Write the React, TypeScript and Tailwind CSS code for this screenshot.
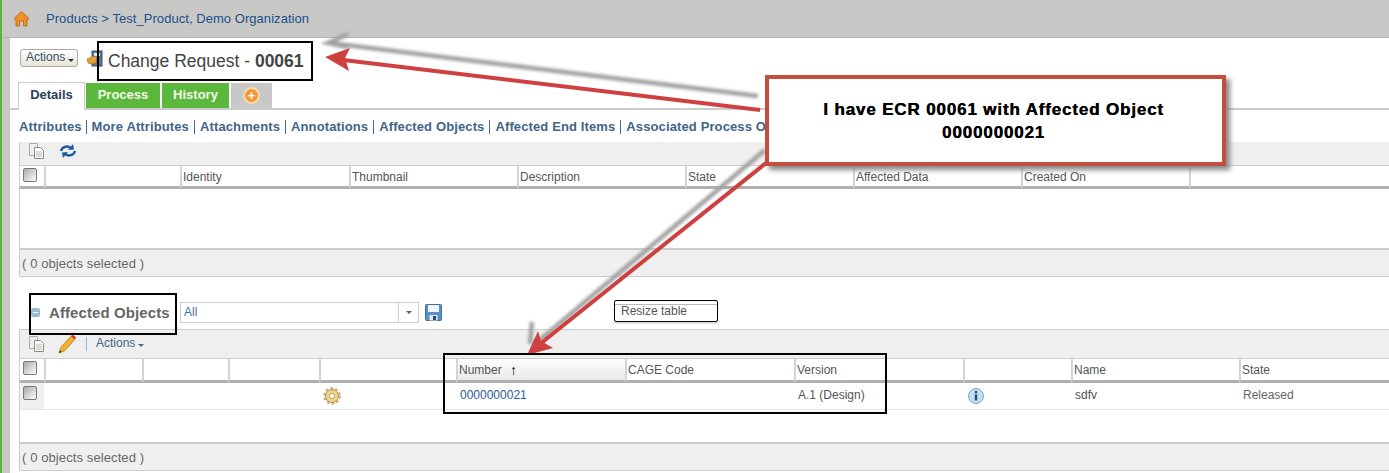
import React from 'react';

const firstCols = 'grid grid-cols-[24px_136px_169px_168px_168px_168px_168px_168px_1fr]';
const secondCols = 'grid grid-cols-[24px_98px_86px_91px_137px_169px_169px_169px_108px_168px_1fr]';

const CheckBox = () => (
  <span className="block w-[14px] h-[14px] rounded-[2px] border border-[#777] bg-gradient-to-br from-[#aaa] to-[#fff]" />
);

const CopyIcon = () => (
  <svg width="18" height="18" viewBox="0 0 18 18">
    <path d="M1.500 1.500h8v12h-8z" fill="#eee" stroke="#aaa" />
    <path d="M6.500 5.500h6l3 3v8h-9z" fill="#fafafa" stroke="#8c8c7c" />
    <path d="M8 10h6M8 12h6M8 14h6" stroke="#bbb" />
  </svg>
);

const RefreshIcon = () => (
  <svg width="18" height="16" viewBox="0 0 18 16">
    <path d="M2 8c1-4 6-6 10-3" fill="none" stroke="#1d5aa6" strokeWidth="2.400" />
    <path d="M16 8c-1 4-6 6-10 3" fill="none" stroke="#1d5aa6" strokeWidth="2.400" />
    <path d="M9 7l6-.5L14 1zM9 9l-6 .5L4 15z" fill="#1d5aa6" />
  </svg>
);

const HeaderCell = ({ children, className = '' }: { children?: React.ReactNode; className?: string }) => (
  <div className={`h-full pl-px pt-[2px] border-l-2 border-l-[#d4d4d4] border-b-[3px] border-b-[#b0b0b0] text-[#555] truncate ${className}`}>
    {children}
  </div>
);

const Footer = () => (
  <div className="h-[29px] pl-[2px] pt-px flex items-center bg-[#efefef] border-t-2 border-t-[#ccc] border-b border-b-[#ccc] text-[13px] tracking-[0.1px] text-[#666]">
    ( 0 objects selected )
  </div>
);

const links = ['Attributes', 'More Attributes', 'Attachments', 'Annotations', 'Affected Objects', 'Affected End Items', 'Associated Process Objects'];

export default function App() {
  return (
    <div className="relative w-[1389px] h-[473px] overflow-hidden bg-[#c8c8c6] border-l-2 border-l-[#5cb83c] font-['Liberation_Sans',Arial,sans-serif] text-[12px]">
      {/* breadcrumb */}
      <div className="h-[38px] flex items-center pl-[11px] border-b border-b-[#b4b4b2]">
        <svg width="17" height="17" viewBox="0 0 17 17">
          <path d="M8.500 1.500L16 8.500l-1.500 1.200-.5-.5V16h-3.500v-5h-4v5H3V9.200l-.5.500L1 8.500z" fill="#ee9322" stroke="#b8601a" strokeWidth="0.800" />
        </svg>
        <div className="ml-[16px] text-[13px] tracking-[0.05px] text-[#20508a]">Products &gt; Test_Product, Demo Organization</div>
      </div>

      <div className="ml-[8px] h-[435px] bg-white">
        {/* title */}
        <div className="h-[43px] flex items-center pl-[10px]">
          <div className="w-[58px] h-[18px] mt-[-3px] flex items-center pl-[5px] rounded-[3px] border border-[#aaa] bg-gradient-to-b from-white to-[#e8e4d4] text-[#33506e]">
            <span className="mt-[-2px]">Actions</span>
            <span className="ml-[3px] mt-[4px] border-x-[3px] border-x-transparent border-t-[3px] border-t-[#333]" />
          </div>
          <svg className="ml-[8px] mt-[-2px]" width="18" height="18" viewBox="0 0 18 18">
            <rect x="6" y="1" width="10" height="15" fill="#56789a" stroke="#33506e" />
            <rect x="8" y="3" width="6" height="3" fill="#dfe8f0" />
            <path d="M1 9l7-3 3 1-1 6-5 1-3-1z" fill="#e3a13a" stroke="#a86f1c" strokeWidth="0.600" />
          </svg>
          <div className="ml-[4px] mt-[4px] text-[17.5px] text-[#444]">
            Change Request - <span className="font-bold">00061</span>
          </div>
        </div>

        {/* tabs */}
        <div className="h-[29px] flex items-end pl-[8px] border-b-2 border-b-[#ccc] text-[13px] font-bold">
          <div className="w-[67px] h-[28px] -mb-[2px] pb-[3px] flex items-center justify-center bg-white border border-b-0 border-[#ccc] text-[#2c4058]">Details</div>
          <div className="ml-px w-[74px] h-[25px] pb-[2px] flex items-center justify-center bg-[#5cb83c] text-[#f2f8e8]">Process</div>
          <div className="ml-[2px] w-[67px] h-[25px] pb-[2px] flex items-center justify-center bg-[#5cb83c] text-[#f2f8e8]">History</div>
          <div className="ml-[2px] w-[41px] h-[25px] flex items-center justify-center bg-[#c8c8c8]">
            <span className="w-[17px] h-[17px] rounded-full bg-[#f09a3a] border-2 border-[#fbd9a8] flex items-center justify-center text-white text-[13px] leading-none">+</span>
          </div>
        </div>

        {/* sub navigation */}
        <div className="h-[32px] pt-[2px] flex items-center pl-[9px] text-[13px] font-bold tracking-[0.12px] text-[#3f6587] whitespace-nowrap">
          {links.map((link, i) => (
            <span key={link} className={i === 0 ? 'pr-[4px]' : 'px-[5px] border-l border-l-[#48688a] leading-[14px]'}>{link}</span>
          ))}
        </div>

        {/* first table */}
        <div className="ml-[9px] border-l border-l-[#ccc]">
          <div className="h-[23px] flex items-center gap-[13px] pl-[8px] pb-[5px] bg-[#efefef]">
            <CopyIcon />
            <RefreshIcon />
          </div>
          <div className={`${firstCols} h-[24px] bg-white border-t border-t-[#ccc]`}>
            <div className="h-full pl-[3px] pt-[2px] border-b-[3px] border-b-[#b0b0b0]"><CheckBox /></div>
            <HeaderCell />
            <HeaderCell>Identity</HeaderCell>
            <HeaderCell>Thumbnail</HeaderCell>
            <HeaderCell>Description</HeaderCell>
            <HeaderCell>State</HeaderCell>
            <HeaderCell>Affected Data</HeaderCell>
            <HeaderCell>Created On</HeaderCell>
            <HeaderCell />
          </div>
          <div className="h-[59px]" />
          <Footer />
        </div>

        {/* second table header */}
        <div className="h-[52px] flex items-end">
          <div className="mb-[5px] flex items-center">
            <span className="ml-[21px] w-[9px] h-[9px] rounded-[2px] bg-[#9bbcd8] flex items-center justify-center">
              <span className="w-[5px] h-px bg-white" />
            </span>
            <span className="ml-[9px] w-[131px] pt-px text-[15px] font-bold text-[#666] tracking-[0.1px]">Affected Objects</span>
            <div className="w-[239px] h-[21px] flex border border-[#ccc] text-[#4d6f94]">
              <span className="flex-1 pl-[3px] leading-[19px]">All</span>
              <span className="w-[20px] border-l border-l-[#ccc] flex items-center justify-center">
                <span className="border-x-[3px] border-x-transparent border-t-[3px] border-t-[#44688c]" />
              </span>
            </div>
            <svg className="ml-[6px]" width="17" height="17" viewBox="0 0 17 17">
              <rect x="0.500" y="0.500" width="16" height="16" rx="1" fill="#5b8fc8" stroke="#3f6fa8" />
              <rect x="3" y="1" width="11" height="7" fill="#f2f6fa" />
              <rect x="4.500" y="11" width="8" height="5.500" fill="#e4eaf0" />
              <rect x="8" y="12" width="3" height="4" fill="#234a78" />
            </svg>
          </div>
        </div>

        {/* second table */}
        <div className="ml-[9px] border-l border-l-[#ccc]">
          <div className="h-[29px] flex items-center pl-[8px] bg-[#efefef] border-t border-t-[#ccc]">
            <CopyIcon />
            <svg className="ml-[11px]" width="20" height="20" viewBox="0 0 20 20">
              <path d="M2 19l2-6L14 2l4 3.500L7.500 17z" fill="#eeb02e" stroke="#b87a18" strokeWidth="0.700" />
              <path d="M14 2l1.500-1.500 3.500 3L18 5.500z" fill="#c0392b" />
              <path d="M2 19l.8-3 2.200 2z" fill="#444" />
            </svg>
            <span className="ml-[9px] h-[14px] border-l border-l-[#8fbce6]" />
            <span className="ml-[9px] mt-[-3px] text-[#3f6587]">Actions</span>
            <span className="ml-[3px] mt-[2px] border-x-[3px] border-x-transparent border-t-[3px] border-t-[#44688c]" />
          </div>
          <div className={`${secondCols} h-[25px] bg-white border-t border-t-[#ccc]`}>
            <div className="h-full pl-[3px] pt-[2px] border-b-[3px] border-b-[#b0b0b0]"><CheckBox /></div>
            <HeaderCell />
            <HeaderCell />
            <HeaderCell />
            <HeaderCell />
            <HeaderCell className="relative bg-gradient-to-b from-white to-[#e8e8e8]">
              Number
              <span className="absolute left-[52px] top-[4px] text-[14px] leading-none text-black">↑</span>
            </HeaderCell>
            <HeaderCell>CAGE Code</HeaderCell>
            <HeaderCell>Version</HeaderCell>
            <HeaderCell />
            <HeaderCell>Name</HeaderCell>
            <HeaderCell>State</HeaderCell>
          </div>
          <div className={`${secondCols} h-[27px] items-center border-b border-b-[#e6e6e6] text-[#555]`}>
            <div className="h-full pl-[3px] pt-[3px] bg-[#f0f0f0]"><CheckBox /></div>
            <div />
            <div />
            <div />
            <svg className="ml-[4px]" width="18" height="18" viewBox="0 0 18 18">
              <circle cx="9" cy="9" r="6.500" fill="#ecd68e" stroke="#b58a4c" strokeWidth="1" />
              <circle cx="9" cy="9" r="7.800" fill="none" stroke="#c9a25e" strokeWidth="1.800" strokeDasharray="2.500 2.500" />
              <circle cx="9" cy="9" r="2.500" fill="#fff" stroke="#b89a60" />
            </svg>
            <div className="pl-[4px] pb-[3px] text-[#2a5a96]">0000000021</div>
            <div />
            <div className="pl-[4px] pb-[3px]">A.1 (Design)</div>
            <svg className="ml-[5px]" width="16" height="16" viewBox="0 0 16 16">
              <circle cx="8" cy="8" r="7.500" fill="#c2def0" stroke="#7aa8c8" />
              <rect x="6.800" y="6.500" width="2.400" height="6" fill="#1f4a78" />
              <rect x="6.800" y="3" width="2.400" height="2.400" fill="#1f4a78" />
            </svg>
            <div className="pl-[4px] pb-[3px]">sdfv</div>
            <div className="pl-[4px] pb-[3px] text-[#666]">Released</div>
          </div>
          <div className="h-[32px]" />
          <Footer />
        </div>
      </div>

      {/* annotation arrows drawn on the screenshot */}
      <svg className="absolute left-[-2px] top-0 pointer-events-none" width="1389" height="473" viewBox="0 0 1389 473">
        <defs>
          <filter id="soft" x="-10%" y="-10%" width="120%" height="120%">
            <feGaussianBlur stdDeviation="1.500" />
          </filter>
        </defs>
        <g filter="url(#soft)" fill="none" stroke="#a0a0a0" strokeWidth="4.500">
          <path d="M758 96L330 43M348 34l-20 9 20 4" />
          <path d="M765 150L535 344M532 322l-2 22" />
        </g>
        <g fill="none" stroke="#cf4040" strokeWidth="4">
          <path d="M760 110L335 59" />
          <path d="M766 163L535 348" />
        </g>
        <path d="M325 57L350 48 345 58 349 71z" fill="#cf4040" />
        <path d="M527 355L538 331 541 341 553 348z" fill="#cf4040" />
      </svg>

      {/* black highlight boxes */}
      <div className="absolute left-[95px] top-[41px] w-[216px] h-[40px] border-2 border-black" />
      <div className="absolute left-[27px] top-[293px] w-[148px] h-[42px] border-2 border-black" />
      <div className="absolute left-[441px] top-[353px] w-[444px] h-[61px] border-2 border-black" />

      {/* resize tooltip */}
      <div className="absolute left-[612px] top-[300px] w-[104px] h-[22px] pl-[6px] rounded-[2px] border border-black bg-white text-[#555] leading-[19px] shadow-[0_2px_1px_#ddd]">
        <div className="border-t border-t-[#bbb] mt-[3px] leading-[13px] -ml-[6px] pl-[6px]">Resize table</div>
      </div>

      {/* callout */}
      <div className="absolute left-[763px] top-[75px] w-[461px] h-[91px] pr-[4px] flex flex-col items-center justify-center bg-white border-4 border-[#c24f3d] shadow-[4px_4px_5px_#888] font-bold text-[17px] leading-[23px] tracking-[0.85px] text-black [text-shadow:0.4px_0_0_#000]">
        <div className="text-center">
          I have ECR 00061 with Affected Object
          <br />
          0000000021
        </div>
      </div>
    </div>
  );
}
